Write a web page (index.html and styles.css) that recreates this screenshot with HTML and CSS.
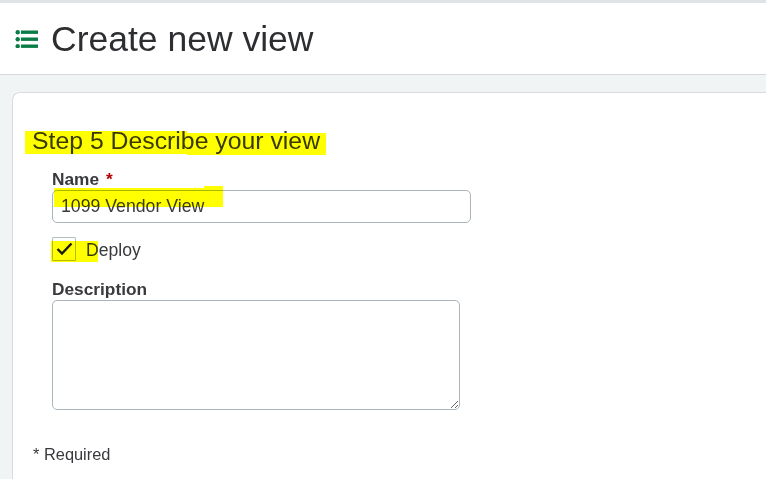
FILE: index.html
```html
<!DOCTYPE html>
<html lang="en">

<head>
    <meta charset="UTF-8">
    <meta name="viewport" content="width=device-width, initial-scale=1.0">
    <link rel="stylesheet" href="styles.css">
    <title>Create new view</title>
</head>

<body>
    <header class="page-header">
        <svg class="list-icon" width="23" height="18" viewBox="0 0 23 18">
            <circle cx="2.7" cy="2.2" r="2.2" />
            <circle cx="2.7" cy="9.2" r="2.2" />
            <circle cx="2.7" cy="16.2" r="2.2" />
            <rect x="6" y="0.5" width="17" height="3.4" />
            <rect x="6" y="7.5" width="17" height="3.4" />
            <rect x="6" y="14.5" width="17" height="3.4" />
        </svg>
        <h1 class="title">Create new view</h1>
    </header>

    <main class="card">
        <h2 class="step-title">Step 5 Describe your view</h2>

        <form class="form">
            <label class="field-label" for="viewName">Name <span class="req">*</span></label>
            <input class="text-input" id="viewName" type="text" value="1099 Vendor View">

            <div class="check-row">
                <span class="check-box">
                    <svg width="17" height="14" viewBox="0 0 17 14">
                        <path d="M1.5 7 L6 11.5 L15.5 1.5" fill="none" stroke="#1c1c1c" stroke-width="2.4" />
                    </svg>
                </span>
                <span class="check-label">Deploy</span>
            </div>

            <label class="field-label" for="viewDesc">Description</label>
            <textarea class="text-area" id="viewDesc"></textarea>
        </form>

        <p class="required-note">* Required</p>
    </main>

    <!-- marker strokes drawn over the page -->
    <div class="mark mark-step-a"></div>
    <div class="mark mark-step-b"></div>
    <div class="mark mark-name-a"></div>
    <div class="mark mark-name-b"></div>
    <div class="mark mark-deploy"></div>
</body>

</html>
```

FILE: styles.css
```css
html, body {
  height: 100%;
}

body {
  margin: 0;
  overflow: hidden;
  font-family: "Liberation Sans", Arial, sans-serif;
  color: #393a3d;
  background-color: #f1f4f5;
}

.page-header {
  display: flex;
  align-items: center;
  height: 71px;
  padding-left: 15px;
  background-color: #fff;
  border-top: 3px solid #dfe3e6;
  border-bottom: 1px solid #d4d7dc;
}

.list-icon {
  fill: #0a7d47;
  margin-right: 13px;
}

.title {
  margin: 2px 0 0;
  font-size: 35.5px;
  font-weight: 400;
  color: #2d2e31;
}

.card {
  box-sizing: border-box;
  margin: 17px 0 0 12px;
  height: 387px;
  padding: 34px 0 0 19px;
  background-color: #fff;
  border: 1px solid #d9dcdf;
  border-right: none;
  border-bottom: none;
  border-radius: 8px 0 0 0;
}

.step-title {
  margin: 0;
  font-size: 24.8px;
  line-height: 28px;
  font-weight: 400;
  color: #393a3d;
}

.form {
  display: flex;
  flex-direction: column;
  align-items: flex-start;
  margin: 15px 0 0 20px;
  font-size: 17.6px;
}

.field-label {
  font-size: 17.3px;
  line-height: 18px;
  font-weight: bold;
  margin-bottom: 2px;
}

.req {
  color: #b50000;
  margin-left: 2px;
}

.text-input {
  box-sizing: border-box;
  width: 419px;
  height: 33px;
  padding: 0 8px;
  font-family: inherit;
  font-size: 17.7px;
  color: #393a3d;
  border: 1px solid #a9b6bb;
  border-radius: 5px;
}

.check-row {
  display: flex;
  align-items: center;
  gap: 10px;
  margin: 14px 0 19px;
}

.check-box {
  display: flex;
  align-items: center;
  justify-content: center;
  box-sizing: border-box;
  width: 24px;
  height: 24px;
  border: 1px solid #b4bdc1;
  border-radius: 1px;
}

.check-label {
  padding-top: 2px;
}

.text-area {
  box-sizing: border-box;
  width: 408px;
  height: 110px;
  border: 1px solid #a9b6bb;
  border-radius: 5px;
}

.required-note {
  margin: 35px 0 0 1px;
  font-size: 16.4px;
}

.mark {
  position: absolute;
  background-color: #ffff00;
  mix-blend-mode: multiply;
}

.mark-step-a {
  left: 25px;
  top: 131px;
  width: 162px;
  height: 23px;
}

.mark-step-b {
  left: 187px;
  top: 133px;
  width: 139px;
  height: 22px;
}

.mark-name-a {
  left: 54px;
  top: 188px;
  width: 150px;
  height: 19px;
}

.mark-name-b {
  left: 204px;
  top: 186px;
  width: 19px;
  height: 21px;
}

.mark-deploy {
  left: 51px;
  top: 241px;
  width: 47px;
  height: 21px;
}
```
